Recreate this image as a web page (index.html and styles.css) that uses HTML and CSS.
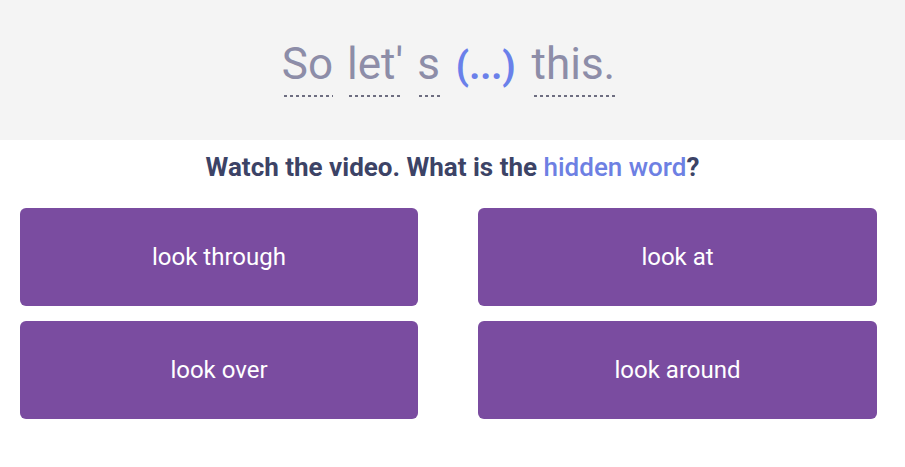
FILE: index.html
```html
<!DOCTYPE html>
<html>
<head>
<meta charset="utf-8">
<link rel="stylesheet" href="styles.css">
</head>
<body>
<div class="top">
  <div class="sentence">
    <span class="word">So</span>
    <span class="word">let'</span>
    <span class="word">s</span>
    <span class="gap">(...)</span>
    <span class="word">this.</span>
  </div>
</div>
<div class="question">Watch the video. What is the <span class="hl">hidden word</span>?</div>
<div class="answers">
  <button class="answer">look through</button>
  <button class="answer">look at</button>
  <button class="answer">look over</button>
  <button class="answer">look around</button>
</div>
</body>
</html>
```
FILE: styles.css
```css
html, body {
  margin: 0;
  padding: 0;
  background: #ffffff;
  font-family: Roboto, "Liberation Sans", sans-serif;
}
.top {
  background: #f4f4f4;
  height: 140px;
  display: flex;
  justify-content: center;
  align-items: flex-start;
}
.sentence {
  display: flex;
  align-items: baseline;
  gap: 14px;
  margin-top: 38px;
  margin-right: 8px;
  font-size: 44px;
  line-height: 52px;
  color: #8d8da8;
}
.word {
  padding-bottom: 7px;
  background-image: linear-gradient(to right, #6d6d80 50%, transparent 50%);
  background-size: 6px 2px;
  background-repeat: repeat-x;
  background-position: 2px bottom;
}
.gap {
  color: #6a80ea;
  font-weight: 700;
  font-size: 38px;
  margin: 0 2px;
}
.question {
  text-align: center;
  font-size: 26px;
  font-weight: 700;
  color: #3c4366;
  margin-top: 12px;
  line-height: 30px;
}
.hl {
  color: #6d80e3;
  font-weight: 500;
}
.answers {
  display: grid;
  grid-template-columns: 398px 399px;
  column-gap: 60px;
  row-gap: 15px;
  margin: 26px 0 0 20px;
}
.answer {
  height: 98px;
  border: none;
  border-radius: 6px;
  background: #7a4ca0;
  color: #ffffff;
  font-family: Roboto, "Liberation Sans", sans-serif;
  font-size: 24px;
  padding: 0;
}
```
